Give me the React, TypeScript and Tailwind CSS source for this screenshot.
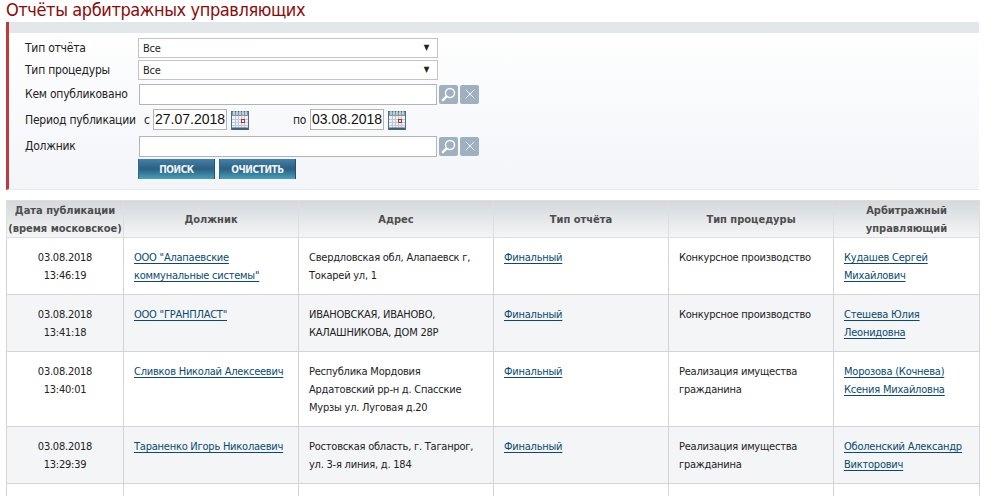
import { X } from "lucide-react";

const rows = [
  {
    date: "03.08.2018",
    time: "13:46:19",
    debtor: ['ООО "Алапаевские', 'коммунальные системы"'],
    address: ["Свердловская обл, Алапаевск г,", "Токарей ул, 1"],
    procedure: ["Конкурсное производство"],
    manager: ["Кудашев Сергей", "Михайлович"],
  },
  {
    date: "03.08.2018",
    time: "13:41:18",
    debtor: ['ООО "ГРАНПЛАСТ"'],
    address: ["ИВАНОВСКАЯ, ИВАНОВО,", "КАЛАШНИКОВА, ДОМ 28Р"],
    procedure: ["Конкурсное производство"],
    manager: ["Стешева Юлия", "Леонидовна"],
  },
  {
    date: "03.08.2018",
    time: "13:40:01",
    debtor: ["Сливков Николай Алексеевич"],
    address: ["Республика Мордовия", "Ардатовский рр-н д. Спасские", "Мурзы ул. Луговая д.20"],
    procedure: ["Реализация имущества", "гражданина"],
    manager: ["Морозова (Кочнева)", "Ксения Михайловна"],
  },
  {
    date: "03.08.2018",
    time: "13:29:39",
    debtor: ["Тараненко Игорь Николаевич"],
    address: ["Ростовская область, г. Таганрог,", "ул. 3-я линия, д. 184"],
    procedure: ["Реализация имущества", "гражданина"],
    manager: ["Оболенский Александр", "Викторович"],
  },
  {
    date: "",
    time: "",
    debtor: [],
    address: ["", ""],
    procedure: [],
    manager: [],
  },
];

function Lines({ items, link }: { items: string[]; link?: boolean }) {
  return (
    <>
      {items.map((line, i) => (
        <div key={i} className="h-[18px] whitespace-nowrap">
          {link ? (
            <a href="#" className="text-[#0b4a70] underline underline-offset-2">
              {line}
            </a>
          ) : (
            line
          )}
        </div>
      ))}
    </>
  );
}

function Calendar() {
  return (
    <svg width="18" height="20" viewBox="0 0 18 20" className="shrink-0">
      <rect x="0.5" y="1.5" width="17" height="18" fill="#eef3f7" stroke="#4f6f88" />
      <rect x="1" y="2" width="16" height="4" fill="#7d97ab" />
      <path d="M3 1v4M6 1v4M9 1v4M12 1v4M15 1v4" stroke="#ffffff" strokeWidth="1" />
      <path d="M1 9.5h16M1 12.5h16M1 15.5h16M4.5 6v13M7.5 6v13M10.5 6v13M13.5 6v13" stroke="#bccad5" strokeWidth="1" />
      <rect x="10.5" y="9.5" width="3" height="3" fill="#ffffff" stroke="#e8201c" />
      <path d="M1 18.5h16" stroke="#3f5f78" strokeWidth="2" />
    </svg>
  );
}

function IconButtons() {
  return (
    <div className="ml-[2px] flex gap-[2px]">
      <div className="flex h-[19px] w-[19px] items-center justify-center rounded-[2px] bg-[#9fb1c0]">
        <svg width="15" height="15" viewBox="0 0 15 15" fill="none" stroke="#ffffff">
          <circle cx="9" cy="6" r="4.5" strokeWidth="1.4" />
          <path d="M5.5 9.5 1.8 13.2" strokeWidth="2.4" strokeLinecap="round" />
        </svg>
      </div>
      <div className="flex h-[19px] w-[19px] items-center justify-center rounded-[2px] bg-[#9fb1c0]">
        <X size={16} strokeWidth={1.25} color="#ffffff" />
      </div>
    </div>
  );
}

function SelectRow({ label }: { label: string }) {
  return (
    <div className="flex h-[22px] items-center">
      <div className="w-[113px] text-[12px]">{label}</div>
      <div className="flex h-[20px] w-[300px] items-center justify-between border border-[#c4c4c4] bg-white pt-[2px] pr-[8px] pl-[4px] text-[11px]">
        <span>Все</span>
        <span className="-mt-[2px] text-[8px] text-[#222]">▼</span>
      </div>
    </div>
  );
}

function SearchRow({ label }: { label: string }) {
  return (
    <div className="flex h-[26px] items-center">
      <div className="w-[114px] text-[12px]">{label}</div>
      <div className="h-[21px] w-[298px] border border-[#b4b4b4] bg-white" />
      <IconButtons />
    </div>
  );
}

function DateBox({ value }: { value: string }) {
  return (
    <div
      className="flex h-[21px] w-[74px] items-center border border-[#b4b4b4] bg-white pl-[1px] text-[14px] tracking-normal text-[#111]"
      style={{ fontFamily: '"Liberation Sans", sans-serif' }}
    >
      {value}
    </div>
  );
}

export default function App() {
  return (
    <div
      className="h-[496px] w-[996px] overflow-hidden bg-white pl-[6px] tracking-[-0.23px] text-[#222] font-stretch-condensed"
      style={{ fontFamily: '"DejaVu Sans Condensed", "DejaVu Sans", sans-serif' }}
    >
      <h1 className="h-[22px] text-[18px] leading-[20px] font-normal tracking-[-0.4px] text-[#8b0a0a]">
        Отчёты арбитражных управляющих
      </h1>

      <div className="h-[168px] w-[973px] border-b border-l-[3px] border-b-[#e6e9ed] border-l-[#c0393f] bg-gradient-to-b from-white to-[#f3f5f9]">
        <div className="h-[11px] bg-[#e2e7ea]" />
        <div className="pt-[4px] pl-[16px]">
          <SelectRow label="Тип отчёта" />
          <SelectRow label="Тип процедуры" />
          <SearchRow label="Кем опубликовано" />
          <div className="flex h-[26px] items-center pb-[1px] text-[12px]">
            <div className="w-[119px]">Период публикации</div>
            <div className="w-[9px]">с</div>
            <DateBox value="27.07.2018" />
            <div className="ml-[4px]">
              <Calendar />
            </div>
            <div className="ml-[44px] w-[17px]">по</div>
            <DateBox value="03.08.2018" />
            <div className="ml-[4px]">
              <Calendar />
            </div>
          </div>
          <SearchRow label="Должник" />
          <div className="ml-[113px] flex gap-[4px]">
            {["ПОИСК", "ОЧИСТИТЬ"].map((label) => (
              <button
                key={label}
                className="h-[20px] w-[77px] bg-gradient-to-b from-[#4382aa] via-[#2d5f80] to-[#46a2be] text-[10px] font-bold tracking-[-0.4px] text-[#eef4f7] shadow-[inset_-1px_0_0_#24506c,inset_1px_0_0_#2f6c8f]"
              >
                {label}
              </button>
            ))}
          </div>
        </div>
      </div>

      <table className="mt-[10px] w-[973px] table-fixed border-collapse text-[11px] leading-[18px]">
        <colgroup>
          <col className="w-[117px]" />
          <col className="w-[175px]" />
          <col className="w-[195px]" />
          <col className="w-[175px]" />
          <col className="w-[165px]" />
          <col className="w-[146px]" />
        </colgroup>
        <thead>
          <tr className="h-[37px] bg-gradient-to-b from-[#d5d9dc] to-[#f5f6f7] font-bold tracking-normal text-[#4d4d4d]">
            <th className="border border-[#dcdedf] pt-[1px]">
              <div className="-mb-[1px]">
                Дата публикации
                <br />
                (время московское)
              </div>
            </th>
            <th className="border border-[#dcdedf] pt-[1px]">Должник</th>
            <th className="border border-[#dcdedf] pt-[1px]">Адрес</th>
            <th className="border border-[#dcdedf] pt-[1px]">Тип отчёта</th>
            <th className="border border-[#dcdedf] pt-[1px]">Тип процедуры</th>
            <th className="border border-[#dcdedf] pt-[1px]">
              <div className="-mb-[1px]">
                Арбитражный
                <br />
                управляющий
              </div>
            </th>
          </tr>
        </thead>
        <tbody>
          {rows.map((row, index) => (
            <tr key={index} className={index % 2 === 1 ? "bg-[#f3f5f7]" : "bg-white"}>
              <td className="border border-[#d4d4d4] px-[10px] pt-[11px] pb-[9px] text-center align-top">
                <div className="h-[18px]">{row.date}</div>
                <div className="h-[18px]">{row.time}</div>
              </td>
              <td className="border border-[#d4d4d4] px-[10px] pt-[11px] pb-[9px] align-top">
                <Lines items={row.debtor} link />
              </td>
              <td className="border border-[#d4d4d4] px-[10px] pt-[11px] pb-[9px] align-top">
                <Lines items={row.address} />
              </td>
              <td className="border border-[#d4d4d4] px-[10px] pt-[11px] pb-[9px] align-top">
                {row.date && <Lines items={["Финальный"]} link />}
              </td>
              <td className="border border-[#d4d4d4] px-[10px] pt-[11px] pb-[9px] align-top">
                <Lines items={row.procedure} />
              </td>
              <td className="border border-[#d4d4d4] px-[10px] pt-[11px] pb-[9px] align-top">
                <Lines items={row.manager} link />
              </td>
            </tr>
          ))}
        </tbody>
      </table>
    </div>
  );
}
